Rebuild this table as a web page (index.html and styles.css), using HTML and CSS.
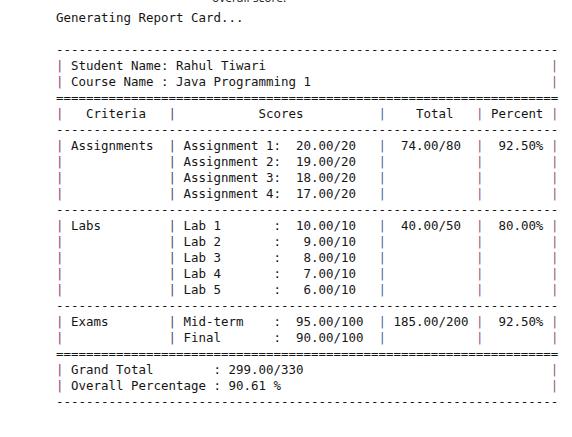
FILE: index.html
```html
<!DOCTYPE html>
<html lang="en">
<head>
    <meta charset="UTF-8">
    <meta name="viewport" content="width=device-width, initial-scale=1.0">
    <title>Report Card</title>
    <link rel="stylesheet" href="styles.css">
</head>
<body>
    <div class="console">
        <div class="prev-line">overall score.</div>
<pre class="output">Generating Report Card...

-------------------------------------------------------------------
<span class="b0">|</span> Student Name: Rahul Tiwari                                      <span class="b4">|</span>
<span class="b0">|</span> Course Name : Java Programming 1                                <span class="b4">|</span>
===================================================================
<span class="b0">|</span>   Criteria   <span class="b1">|</span>           Scores          <span class="b2">|</span>    Total   <span class="b3">|</span> Percent <span class="b4">|</span>
-------------------------------------------------------------------
<span class="b0">|</span> Assignments  <span class="b1">|</span> Assignment 1:  20.00/20   <span class="b2">|</span>  74.00/80  <span class="b3">|</span>  92.50% <span class="b4">|</span>
<span class="b0">|</span>              <span class="b1">|</span> Assignment 2:  19.00/20   <span class="b2">|</span>            <span class="b3">|</span>         <span class="b4">|</span>
<span class="b0">|</span>              <span class="b1">|</span> Assignment 3:  18.00/20   <span class="b2">|</span>            <span class="b3">|</span>         <span class="b4">|</span>
<span class="b0">|</span>              <span class="b1">|</span> Assignment 4:  17.00/20   <span class="b2">|</span>            <span class="b3">|</span>         <span class="b4">|</span>
-------------------------------------------------------------------
<span class="b0">|</span> Labs         <span class="b1">|</span> Lab 1       :  10.00/10   <span class="b2">|</span>  40.00/50  <span class="b3">|</span>  80.00% <span class="b4">|</span>
<span class="b0">|</span>              <span class="b1">|</span> Lab 2       :   9.00/10   <span class="b2">|</span>            <span class="b3">|</span>         <span class="b4">|</span>
<span class="b0">|</span>              <span class="b1">|</span> Lab 3       :   8.00/10   <span class="b2">|</span>            <span class="b3">|</span>         <span class="b4">|</span>
<span class="b0">|</span>              <span class="b1">|</span> Lab 4       :   7.00/10   <span class="b2">|</span>            <span class="b3">|</span>         <span class="b4">|</span>
<span class="b0">|</span>              <span class="b1">|</span> Lab 5       :   6.00/10   <span class="b2">|</span>            <span class="b3">|</span>         <span class="b4">|</span>
-------------------------------------------------------------------
<span class="b0">|</span> Exams        <span class="b1">|</span> Mid-term    :  95.00/100  <span class="b2">|</span> 185.00/200 <span class="b3">|</span>  92.50% <span class="b4">|</span>
<span class="b0">|</span>              <span class="b1">|</span> Final       :  90.00/100  <span class="b2">|</span>            <span class="b3">|</span>         <span class="b4">|</span>
===================================================================
<span class="b0">|</span> Grand Total        : 299.00/330                                 <span class="b4">|</span>
<span class="b0">|</span> Overall Percentage : 90.61 %                                    <span class="b4">|</span>
-------------------------------------------------------------------</pre>
    </div>
</body>
</html>
```

FILE: styles.css
```css
body {
    margin: 0;
    background-color: #fff;
}
.console {
    padding-left: 56px;
}
.prev-line {
    font-family: "Open Sans", sans-serif;
    font-size: 12px;
    line-height: 16px;
    color: #222;
    padding-left: 156px;
    margin-top: -10px;
}
.output {
    margin: 4px 0 0;
    font-family: "DejaVu Sans Mono", monospace;
    font-size: 12.46px;
    line-height: 16px;
    color: #151515;
}
.b0 {
    color: #8a3676;
}
.b1 {
    color: #46486e;
}
.b2 {
    color: #4a6896;
}
.b3,
.b4 {
    color: #8c5a76;
}
```
